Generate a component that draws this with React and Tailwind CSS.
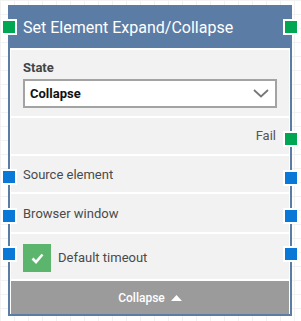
import React from 'react';

const Port = ({ color, className }) => (
  <div className={`absolute h-4 w-4 bg-white p-[2px] ${className}`}>
    <div className={`h-full w-full ${color}`} />
  </div>
);

const green = 'bg-[#00a651]';
const blue = 'bg-[#0a78d7]';

export default function App() {
  return (
    <div className="relative h-[321px] w-[301px] overflow-hidden bg-white bg-[linear-gradient(to_right,#f2f2f2_1px,transparent_1px),linear-gradient(to_bottom,#f2f2f2_1px,transparent_1px)] bg-[size:14px_14px] font-['Roboto',sans-serif]">
      <div className="ml-[8px] mt-[5px] flex w-[284px] flex-col border-2 border-[#5b7ca4] bg-white">
        {/* header */}
        <div className="flex h-[41px] items-center bg-[#5b7ca4] pl-[13px] text-[16px] text-white">
          Set Element Expand/Collapse
        </div>

        <div className="flex flex-col gap-[2px] px-[1px] pt-[2px]">
          {/* state */}
          <div className="h-[66px] bg-[#f2f2f2] px-[12px] pt-[10px]">
            <div className="text-[13px] font-bold leading-[15px] text-[#444]">State</div>
            <div className="mt-[4px] flex h-[29px] items-center justify-between border-2 border-[#a3a3a3] bg-white pl-[5px] pr-[6px]">
              <span className="text-[13px] font-bold text-[#111]">Collapse</span>
              <svg width="16" height="9" viewBox="0 0 16 9" fill="none">
                <polyline points="1,1 8,7.5 15,1" stroke="#777" strokeWidth="1.8" />
              </svg>
            </div>
          </div>

          {/* fail */}
          <div className="flex h-[36px] items-center justify-end bg-[#f2f2f2] pr-[13px] text-[13px] text-[#555]">
            Fail
          </div>

          <div className="flex h-[36px] items-center bg-[#f2f2f2] pl-[12px] pt-[2px] text-[13px] text-[#4a4a4a]">
            Source element
          </div>

          <div className="flex h-[38px] items-center bg-[#f2f2f2] pl-[12px] pt-[2px] text-[13px] text-[#4a4a4a]">
            Browser window
          </div>

          <div className="flex h-[45px] items-center gap-[7px] bg-[#f2f2f2] pl-[12px] pt-[3px] text-[13px] text-[#4a4a4a]">
            <div className="flex h-[28px] w-[28px] items-center justify-center bg-[#5cb56c]">
              <svg width="13" height="11" viewBox="0 0 13 11" fill="none">
                <polyline points="1.5,5.5 5,9 11.5,1.5" stroke="white" strokeWidth="2.6" />
              </svg>
            </div>
            Default timeout
          </div>

          {/* footer */}
          <div className="flex h-[33px] items-center justify-center gap-[6px] bg-[#9b9b9b] text-[12px] font-medium text-white">
            <span>Collapse</span>
            <svg width="11" height="6" viewBox="0 0 11 6">
              <polygon points="0,6 5.5,0 11,6" fill="white" />
            </svg>
          </div>
        </div>
      </div>

      <Port color={green} className="left-[1px] top-[19px]" />
      <Port color={green} className="left-[283px] top-[19px]" />
      <Port color={green} className="left-[283px] top-[131px]" />
      <Port color={blue} className="left-[1px] top-[169px]" />
      <Port color={blue} className="left-[283px] top-[170px]" />
      <Port color={blue} className="left-[1px] top-[208px]" />
      <Port color={blue} className="left-[283px] top-[208px]" />
      <Port color={blue} className="left-[1px] top-[246px]" />
      <Port color={blue} className="left-[283px] top-[246px]" />
    </div>
  );
}
